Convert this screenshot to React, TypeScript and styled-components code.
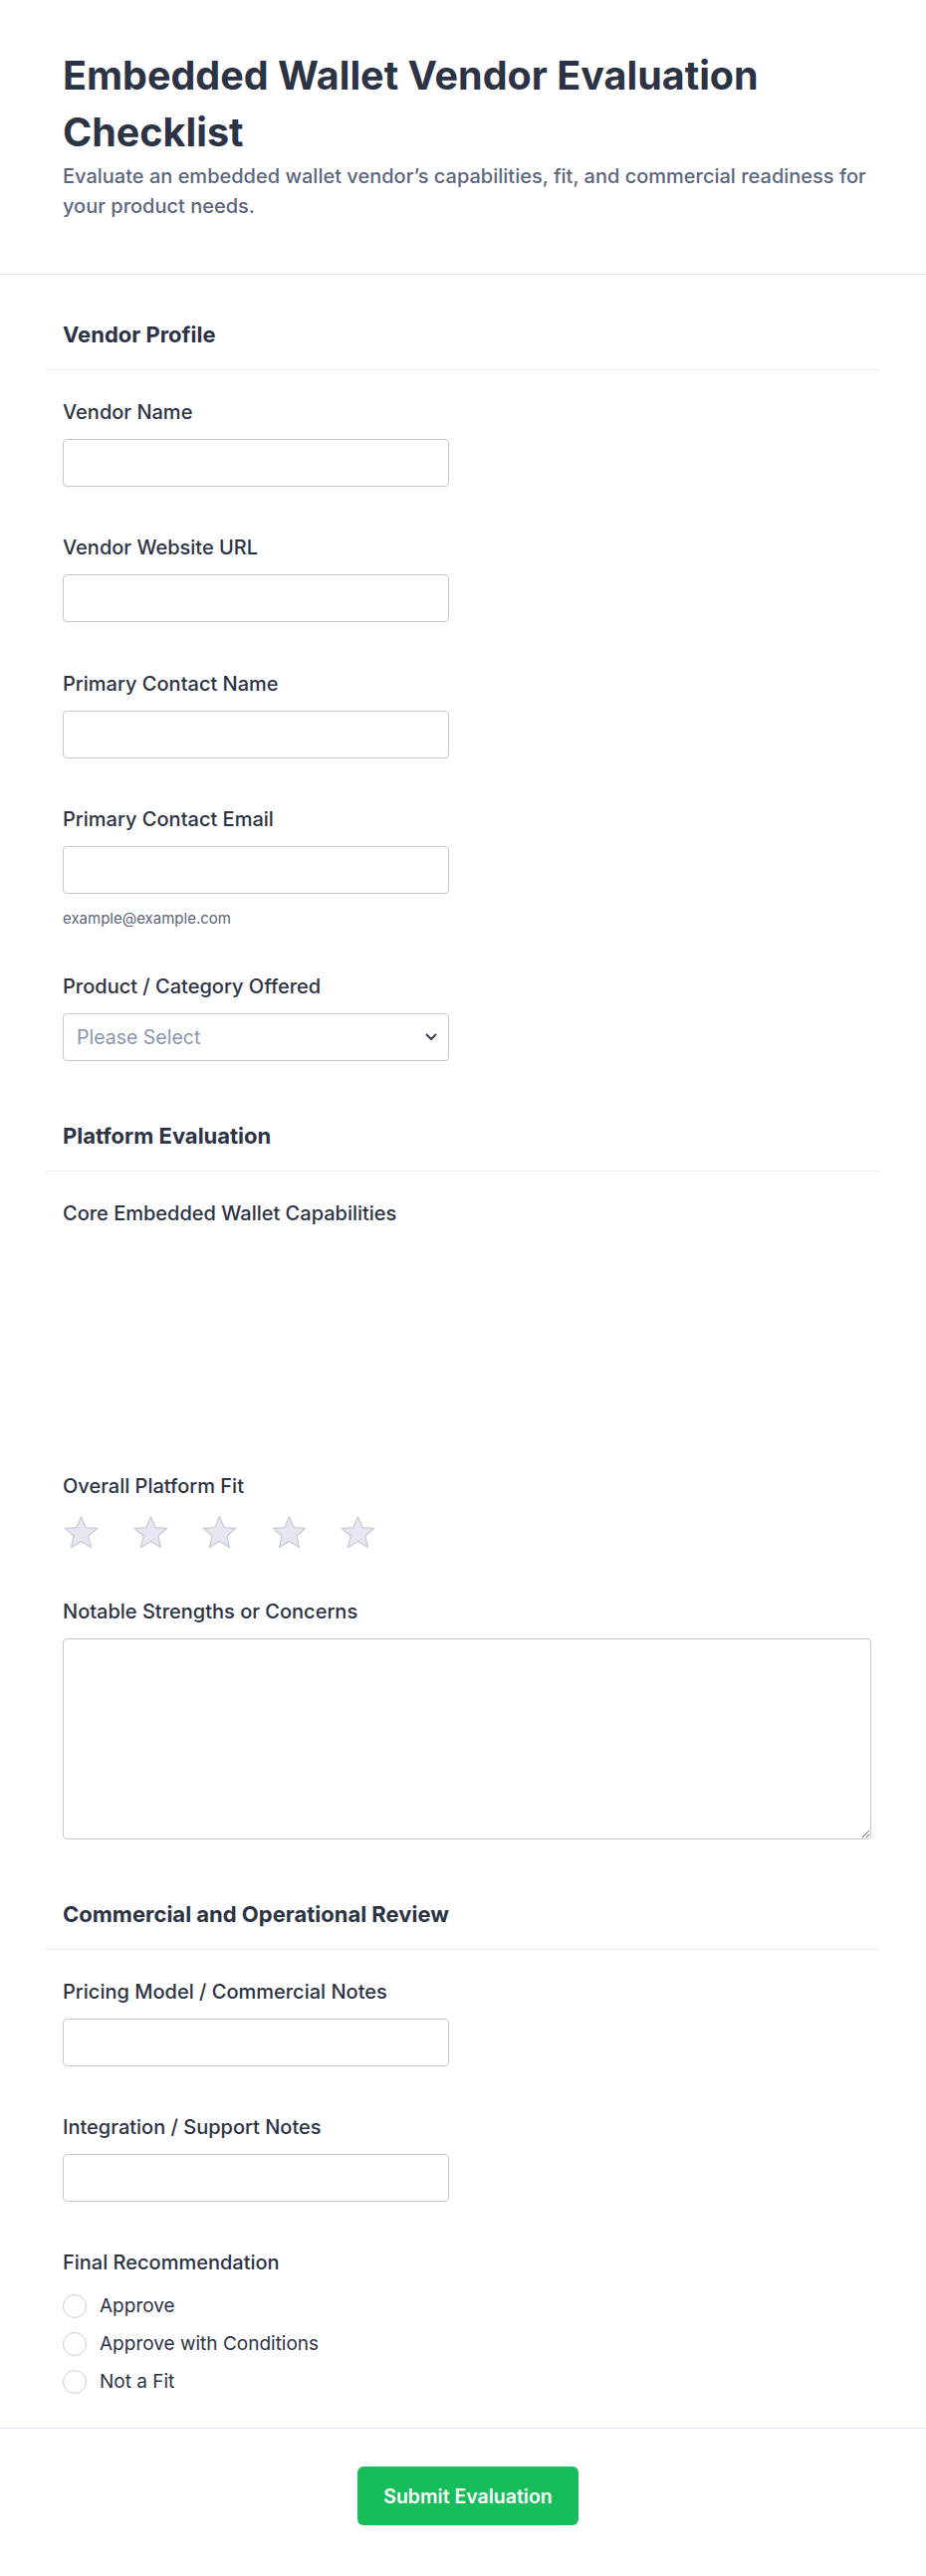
import styled, { createGlobalStyle } from 'styled-components';

const GlobalStyle = createGlobalStyle`
  * { box-sizing: border-box; }
  body {
    margin: 0;
    background: #ffffff;
    font-family: Inter, "Noto Sans", Arial, sans-serif;
    color: #2c3345;
  }
`;

const Page = styled.div`
  width: 100%;
  background: #ffffff;
`;

const Header = styled.header`
  padding: 48px 40px 53px 63px;
  border-bottom: 1px solid #dfe2ea;
`;

const Title = styled.h1`
  margin: 0;
  font-size: 39.5px;
  line-height: 57px;
  font-weight: 700;
  color: #2c3345;
`;

const Subtitle = styled.p`
  margin: 0;
  font-size: 20px;
  line-height: 30px;
  font-weight: 500;
  color: #5c677d;
`;

const Form = styled.form`
  margin: 0 46px;
  padding-bottom: 12px;
`;

const Section = styled.section`
  padding-top: 46px;
`;

const SectionTitle = styled.h2`
  margin: 0;
  padding: 0 17px 20px;
  font-size: 22px;
  line-height: 29px;
  font-weight: 700;
  color: #2c3345;
  border-bottom: 1px solid #eceef3;
`;

const SectionBody = styled.div`
  display: flex;
  flex-direction: column;
  gap: 49.25px;
  padding: 30px 0 15px;
`;

const Field = styled.div`
  padding: 0 9px 0 17px;
  display: flex;
  flex-direction: column;
  align-items: flex-start;
`;

const Label = styled.label`
  display: block;
  font-size: 20px;
  line-height: 24px;
  font-weight: 500;
  color: #2c3345;
  margin-bottom: 15px;
`;

const TextInput = styled.input`
  width: 388px;
  height: 48px;
  padding: 0 14px;
  border: 1px solid #c3c8d5;
  border-radius: 4px;
  background: #fff;
  font: inherit;
  font-size: 19px;
  color: #2c3345;
  outline: none;
`;

const Helper = styled.div`
  margin-top: 15px;
  margin-bottom: -3px;
  font-size: 15px;
  line-height: 20px;
  color: #5b6478;
`;

const SelectWrap = styled.div`
  position: relative;
  width: 388px;
  height: 48px;
`;

const Select = styled.select`
  width: 100%;
  height: 100%;
  padding: 0 36px 0 13px;
  appearance: none;
  border: 1px solid #c3c8d5;
  border-radius: 4px;
  background: #fff;
  font-family: inherit;
  font-size: 19.5px;
  color: #8a96ab;
  outline: none;
`;

const Chevron = styled.svg`
  position: absolute;
  right: 12px;
  top: 50%;
  transform: translateY(-50%);
  pointer-events: none;
`;

const MatrixArea = styled.div`
  width: 100%;
  height: 186px;
`;

const StarRow = styled.div`
  display: flex;
  gap: 32.5px;
  margin-top: 2px;
`;

const StarButton = styled.button`
  padding: 0;
  border: 0;
  background: none;
  cursor: pointer;
  width: 37px;
  height: 35px;
  display: flex;
`;

const TextArea = styled.textarea`
  width: 100%;
  height: 202px;
  padding: 12px 14px;
  border: 1px solid #c3c8d5;
  border-radius: 4px;
  font: inherit;
  font-size: 19px;
  outline: none;
  resize: vertical;
`;

const RadioList = styled.div`
  display: flex;
  flex-direction: column;
  margin-top: -2px;
`;

const RadioRow = styled.label`
  display: flex;
  align-items: center;
  gap: 13px;
  height: 38px;
  cursor: pointer;
`;

const RadioInput = styled.input`
  appearance: none;
  margin: 0;
  width: 24px;
  height: 24px;
  border: 1.5px solid #c8ccd8;
  border-radius: 50%;
  background: #fff;
  flex-shrink: 0;
`;

const RadioText = styled.span`
  font-size: 19px;
  line-height: 24px;
  color: #2c3345;
`;

const Footer = styled.div`
  border-top: 1px solid #e4e7ee;
  padding: 38px 0 50px;
  display: flex;
  justify-content: center;
`;

const SubmitButton = styled.button`
  width: 222px;
  height: 59px;
  margin-left: 10px;
  border: 0;
  border-radius: 6px;
  background: #18bd5b;
  color: #ffffff;
  font-family: inherit;
  font-size: 19.5px;
  font-weight: 600;
  cursor: pointer;
`;

const Star = () => (
  <svg width="37" height="35" viewBox="0 0 37 35">
    <path
      d="M18.5 1.8 L23.1 12.6 L34.8 13.5 L25.9 21.1 L28.6 32.6 L18.5 26.5 L8.4 32.6 L11.1 21.1 L2.2 13.5 L13.9 12.6 Z"
      fill="#e5e7f0"
      stroke="#c9cdd9"
      strokeWidth="1.3"
      strokeLinejoin="round"
    />
  </svg>
);

const TextField = ({ label, helper }: { label: string; helper?: string }) => (
  <Field>
    <Label>{label}</Label>
    <TextInput type="text" />
    {helper && <Helper>{helper}</Helper>}
  </Field>
);

const App = () => (
  <Page>
    <GlobalStyle />
    <Header>
      <Title>Embedded Wallet Vendor Evaluation Checklist</Title>
      <Subtitle>
        Evaluate an embedded wallet vendor’s capabilities, fit, and commercial readiness for your product needs.
      </Subtitle>
    </Header>
    <Form onSubmit={(e) => e.preventDefault()}>
      <Section>
        <SectionTitle>Vendor Profile</SectionTitle>
        <SectionBody>
          <TextField label="Vendor Name" />
          <TextField label="Vendor Website URL" />
          <TextField label="Primary Contact Name" />
          <TextField label="Primary Contact Email" helper="example@example.com" />
          <Field>
            <Label>Product / Category Offered</Label>
            <SelectWrap>
              <Select defaultValue="">
                <option value="" disabled>
                  Please Select
                </option>
              </Select>
              <Chevron width="12" height="8" viewBox="0 0 12 8">
                <path d="M1.5 1.5 L6 6 L10.5 1.5" fill="none" stroke="#3a4256" strokeWidth="2" strokeLinecap="round" strokeLinejoin="round" />
              </Chevron>
            </SelectWrap>
          </Field>
        </SectionBody>
      </Section>

      <Section>
        <SectionTitle>Platform Evaluation</SectionTitle>
        <SectionBody>
          <Field>
            <Label>Core Embedded Wallet Capabilities</Label>
            <MatrixArea />
          </Field>
          <Field>
            <Label>Overall Platform Fit</Label>
            <StarRow>
              {[1, 2, 3, 4, 5].map((n) => (
                <StarButton key={n} type="button" aria-label={`${n} star`}>
                  <Star />
                </StarButton>
              ))}
            </StarRow>
          </Field>
          <Field>
            <Label>Notable Strengths or Concerns</Label>
            <TextArea />
          </Field>
        </SectionBody>
      </Section>

      <Section>
        <SectionTitle>Commercial and Operational Review</SectionTitle>
        <SectionBody>
          <TextField label="Pricing Model / Commercial Notes" />
          <TextField label="Integration / Support Notes" />
          <Field>
            <Label>Final Recommendation</Label>
            <RadioList>
              {['Approve', 'Approve with Conditions', 'Not a Fit'].map((opt) => (
                <RadioRow key={opt}>
                  <RadioInput type="radio" name="recommendation" value={opt} />
                  <RadioText>{opt}</RadioText>
                </RadioRow>
              ))}
            </RadioList>
          </Field>
        </SectionBody>
      </Section>
    </Form>
    <Footer>
      <SubmitButton type="submit">Submit Evaluation</SubmitButton>
    </Footer>
  </Page>
);

export default App;
